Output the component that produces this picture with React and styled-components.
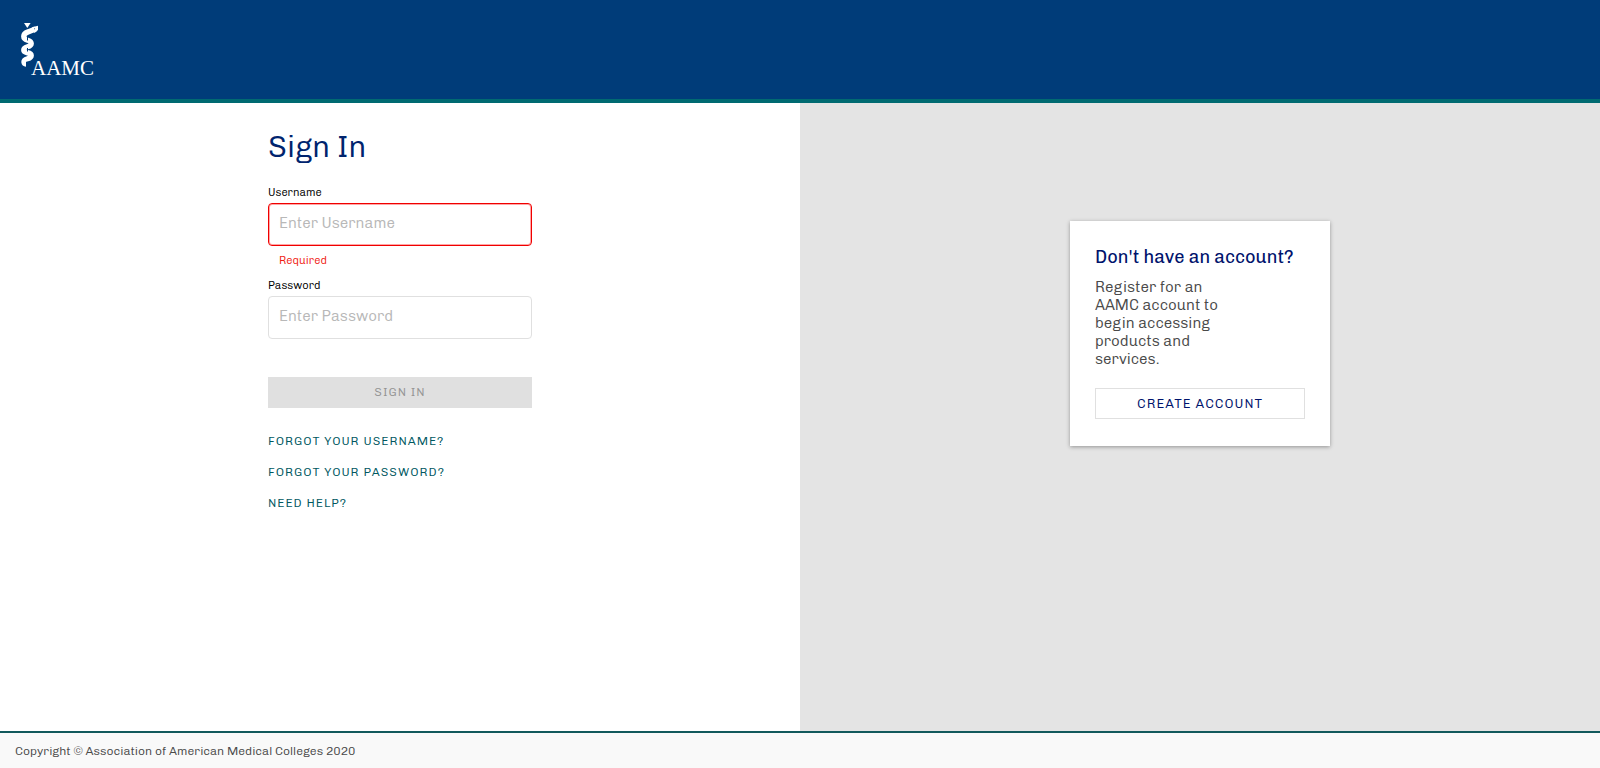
import React from 'react';
import styled, { createGlobalStyle } from 'styled-components';

const navy = '#00136c';

const GlobalStyle = createGlobalStyle`
  *, *::before, *::after { box-sizing: border-box; }
  body {
    margin: 0;
    font-family: Chivo, Inter, "Liberation Sans", sans-serif;
    font-feature-settings: "cv08";
    font-weight: 300;
    color: #4a4a4a;
    background: #fff;
  }
`;

const Page = styled.div`
  min-height: 100vh;
  display: flex;
  flex-direction: column;
`;

const Header = styled.header`
  height: 103px;
  padding: 16px 20px;
  background: #003c79;
  border-bottom: 4px solid #006a71;
`;

const LogoLink = styled.a`
  display: block;
  width: 90px;
`;

const Columns = styled.main`
  flex: 1;
  display: grid;
  grid-template-columns: 1fr 1fr;
`;

const SignInPane = styled.section`
  padding: 26px 24px;
`;

const RegisterPane = styled.section`
  padding: 118px 24px 24px;
  background: #e4e4e4;
`;

const SignInForm = styled.form`
  width: 100%;
  max-width: 264px;
  margin: 0 auto;
`;

const Title = styled.h1`
  margin: 0 0 22px;
  font-size: 30px;
  line-height: 36px;
  font-weight: 300;
  color: #00246e;
`;

const Field = styled.div`
  display: flex;
  flex-direction: column;
`;

const Label = styled.label`
  margin-bottom: 4px;
  font-size: 11px;
  line-height: 12px;
  color: #000;
`;

const TextInput = styled.input`
  width: 100%;
  height: 43px;
  padding: 0 10px 4px;
  border: 1px solid ${(p) => (p.$invalid ? '#f00000' : '#e0e0e0')};
  box-shadow: ${(p) => (p.$invalid ? 'inset 0 0 0 1px rgba(255, 0, 0, 0.35)' : 'none')};
  border-radius: 4px;
  outline: 0;
  font: inherit;
  font-size: 15px;
  background: #fff;

  &::placeholder {
    color: #b8b8b8;
    opacity: 1;
  }
`;

const FieldMessage = styled.p`
  margin: 0;
  padding: 7px 11px 12px;
  font-size: 11px;
  line-height: 15px;
  color: #f01c14;
`;

const Button = styled.button`
  display: block;
  width: 100%;
  height: 31px;
  padding: 0 0 1px;
  border: 1px solid #e0e0e0;
  border-radius: 0;
  font: inherit;
  font-size: 13px;
  letter-spacing: 1px;
  text-transform: uppercase;
  color: ${navy};
  background: #fff;

  &:disabled {
    font-size: 12px;
    color: #949494;
    background: #e0e0e0;
  }
`;

const Actions = styled.div`
  padding: 38px 0 25px;
`;

const HelpLinks = styled.nav`
  display: flex;
  flex-direction: column;
  align-items: flex-start;
  gap: 15px;
`;

const HelpLink = styled.a`
  font-size: 12px;
  line-height: 16px;
  letter-spacing: 1px;
  text-transform: uppercase;
  text-decoration: none;
  color: #00585f;
`;

const Card = styled.article`
  width: 100%;
  max-width: 260px;
  margin: 0 auto;
  padding: 25px 25px 27px;
  background: #fff;
  box-shadow: 0 1px 4px rgba(0, 0, 0, 0.35);
`;

const CardTitle = styled.h2`
  margin: 0 0 10px;
  font-size: 18px;
  line-height: 22px;
  font-weight: 400;
  white-space: nowrap;
  color: ${navy};
`;

const CardText = styled.p`
  max-width: 130px;
  margin: 0 0 20px;
  font-size: 15px;
  line-height: 18px;
`;

const Footer = styled.footer`
  padding: 10px 15px 9px;
  border-top: 2px solid #12595c;
  font-size: 12px;
  line-height: 16px;
  background: #f9f9f9;
`;

function Logo() {
  return (
    <svg width="90" height="67" viewBox="20 16 90 67" role="img" aria-label="AAMC">
      <g fill="#fff">
        <path d="M24 23h6.600l-3.300 5z" />
        <path
          d="M35.500 29C30 31.500 23.800 32 23.800 36.500C23.800 41.500 31.200 39 31.200 43.500C31.200 48 23.800 45.500 23.800 50C23.800 54 31.200 51.500 31.200 55.500C31.200 60 23.800 57.500 24 62C24.200 63.500 25 64 26 64"
          fill="none"
          stroke="#fff"
          strokeWidth="5.400"
        />
        <path d="M32 27.200l6-1.400v4.200l-3.500 3z" />
        <text x="31" y="75" fontFamily="'Liberation Serif', serif" fontSize="21" fontWeight="400">AAMC</text>
      </g>
      <path d="M27.500 37v3.500M27.500 48v3.500" stroke="#003c79" strokeWidth="1" />
      <circle cx="34.600" cy="28.800" r="0.500" fill="#003c79" />
    </svg>
  );
}

export default function App() {
  return (
    <Page>
      <GlobalStyle />
      <Header>
        <LogoLink href="#home"><Logo /></LogoLink>
      </Header>
      <Columns>
        <SignInPane>
          <SignInForm>
            <Title>Sign In</Title>
            <Field>
              <Label htmlFor="username">Username</Label>
              <TextInput
                id="username"
                placeholder="Enter Username"
                aria-invalid="true"
                aria-describedby="username-message"
                $invalid
              />
              <FieldMessage id="username-message">Required</FieldMessage>
            </Field>
            <Field>
              <Label htmlFor="password">Password</Label>
              <TextInput id="password" type="password" placeholder="Enter Password" />
            </Field>
            <Actions>
              <Button type="submit" disabled>Sign In</Button>
            </Actions>
            <HelpLinks>
              <HelpLink href="#username-help">Forgot your username?</HelpLink>
              <HelpLink href="#password-help">Forgot your password?</HelpLink>
              <HelpLink href="#help">Need help?</HelpLink>
            </HelpLinks>
          </SignInForm>
        </SignInPane>
        <RegisterPane>
          <Card>
            <CardTitle>Don't have an account?</CardTitle>
            <CardText>Register for an AAMC account to begin accessing products and services.</CardText>
            <Button type="button">Create account</Button>
          </Card>
        </RegisterPane>
      </Columns>
      <Footer>Copyright © Association of American Medical Colleges 2020</Footer>
    </Page>
  );
}
